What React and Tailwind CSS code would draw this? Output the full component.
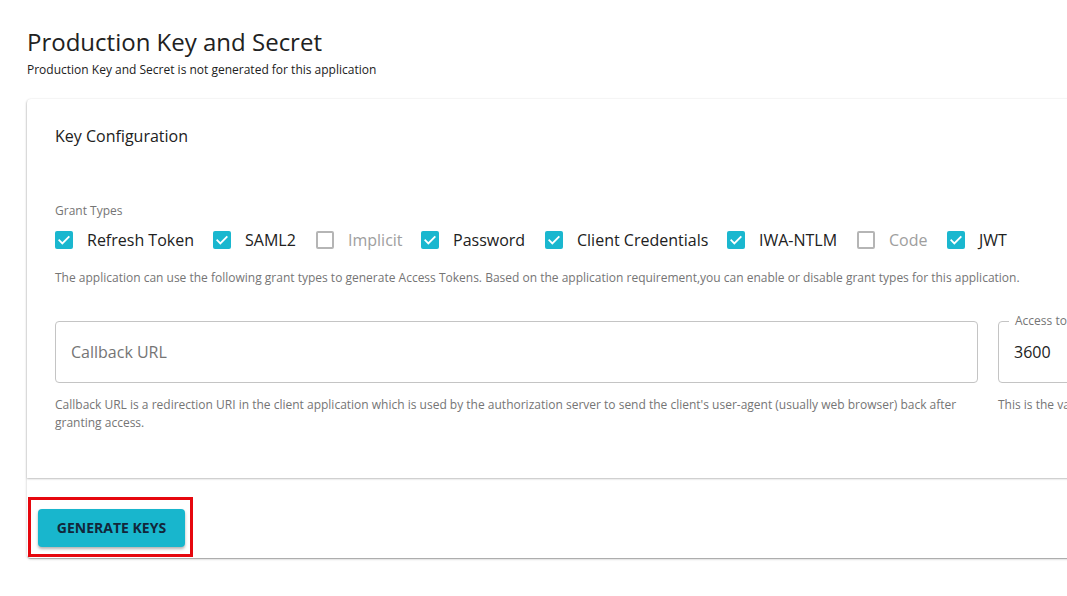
import React from 'react';

const grants = [
  { label: 'Refresh Token', on: true, w: 'w-[158px]' },
  { label: 'SAML2', on: true, w: 'w-[103px]' },
  { label: 'Implicit', on: false, w: 'w-[105px]' },
  { label: 'Password', on: true, w: 'w-[124px]' },
  { label: 'Client Credentials', on: true, w: 'w-[182px]' },
  { label: 'IWA-NTLM', on: true, w: 'w-[130px]' },
  { label: 'Code', on: false, w: 'w-[90px]' },
  { label: 'JWT', on: true, w: 'w-[80px]' },
];

function Check({ on }) {
  if (!on) {
    return <span className="w-[18px] h-[18px] rounded-[2px] border-2 border-[#b5b5b5] bg-white shrink-0" />;
  }
  return (
    <span className="w-[18px] h-[18px] rounded-[2px] bg-[#1ab7cf] flex items-center justify-center shrink-0">
      <svg viewBox="0 0 24 24" className="w-[16px] h-[16px]" fill="none" stroke="white" strokeWidth="2.8" strokeLinecap="square">
        <path d="M5 12.5l4.5 4.5L19 7.5" />
      </svg>
    </span>
  );
}

export default function App() {
  return (
    <div className="w-screen min-h-screen overflow-hidden bg-white text-[#212121]" style={{ fontFamily: '"Open Sans", "Noto Sans", sans-serif' }}>
      <div className="pl-[27px] pt-[26px]">
        <h1 className="text-[24px] leading-[32px] text-[#212121]">Production Key and Secret</h1>
        <p className="text-[12px] leading-[16px] mt-[4px] text-[#212121]">Production Key and Secret is not generated for this application</p>

        <div className="mt-[21px] w-[1900px] rounded-[4px] bg-white shadow-[0_1px_3px_rgba(0,0,0,0.2),0_1px_1px_rgba(0,0,0,0.14),0_2px_1px_-1px_rgba(0,0,0,0.12)]">
          {/* Key Configuration */}
          <div className="pl-[28px] pt-[26px] pb-[46px] rounded-t-[4px] shadow-[0_1px_2px_rgba(0,0,0,0.25)]">
            <h2 className="text-[16px] leading-[22px] text-[#212121]">Key Configuration</h2>

            <div className="mt-[56px] text-[12px] leading-[16px] text-[#757575]">Grant Types</div>
            <div className="flex items-center mt-[9px] h-[24px]">
              {grants.map((g) => (
                <label key={g.label} className={`flex items-center shrink-0 ${g.w}`}>
                  <Check on={g.on} />
                  <span className={`ml-[14px] text-[16px] leading-[24px] whitespace-nowrap ${g.on ? 'text-[#212121]' : 'text-[#9e9e9e]'}`}>{g.label}</span>
                </label>
              ))}
            </div>
            <p className="mt-[18px] text-[12px] leading-[16px] text-[#757575]">
              The application can use the following grant types to generate Access Tokens. Based on the application requirement,you can enable or disable grant types for this application.
            </p>

            <div className="mt-[35px] flex gap-[20px]">
              <div className="w-[923px]">
                <div className="h-[62px] rounded-[4px] border border-[#c4c4c4] flex items-center px-[15px]">
                  <span className="text-[16px] text-[#757575]">Callback URL</span>
                </div>
                <p className="mt-[13px] pr-[20px] text-[12px] leading-[18px] text-[#757575]">
                  Callback URL is a redirection URI in the client application which is used by the authorization server to send the client's user-agent (usually web browser) back after granting access.
                </p>
              </div>
              <div className="w-[600px]">
                <div className="relative h-[62px] rounded-[4px] border border-[#c4c4c4] flex items-center px-[15px]">
                  <span className="absolute -top-[9px] left-[10px] bg-white px-[6px] text-[12px] leading-[16px] text-[#757575]">Access token expiry time</span>
                  <span className="text-[16px] text-[#212121]">3600</span>
                </div>
                <p className="mt-[13px] text-[12px] leading-[18px] text-[#757575]">
                  This is the validity period of the access token in seconds.
                </p>
              </div>
            </div>
          </div>

          {/* Actions */}
          <div className="h-[80px] pl-[1px] pt-[19px]">
            <div className="inline-block border-[3px] border-[#e6070e] pl-[7px] pr-[5px] pt-[9px] pb-[7px]">
              <button className="h-[38px] w-[147px] rounded-[4px] bg-[#18b6cd] text-[14px] font-bold text-[#12263a] uppercase shadow-[0_2px_3px_rgba(0,0,0,0.3)]">
                <span className="relative -top-[1px]">Generate Keys</span>
              </button>
            </div>
          </div>
        </div>
      </div>
    </div>
  );
}
